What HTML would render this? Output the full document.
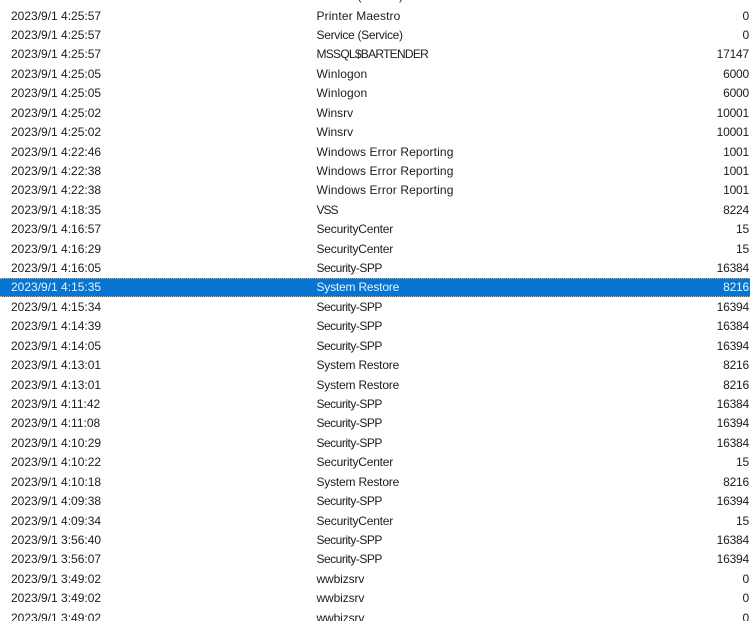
<!DOCTYPE html>
<html>
<head>
<meta charset="utf-8">
<style>
html,body{margin:0;padding:0;background:#fff;}
#v{position:relative;width:750px;height:621px;overflow:hidden;background:#fff;font-family:"Liberation Sans",sans-serif;font-size:12px;color:#1c1c1c;}
#v span{position:absolute;line-height:14px;white-space:nowrap;filter:blur(0.25px);}
.a{left:11px;}
.b{left:316.5px;}
.c{right:1px;letter-spacing:-0.2px;}
.pm{letter-spacing:0.13px;}
.sv{letter-spacing:-0.3px;}
.ms{letter-spacing:-0.73px;}
.wl{letter-spacing:0.1px;}
.we{letter-spacing:0.13px;}
.vs{letter-spacing:-1px;}
.sc{letter-spacing:-0.2px;}
.sp{letter-spacing:-0.5px;}
.sr{letter-spacing:-0.2px;}
.ww{letter-spacing:-0.12px;}
#sel{position:absolute;left:0;top:278px;width:750px;height:19px;background:#0874d1;border-top:1px dotted #e8a050;border-bottom:1px dotted #e8a050;box-sizing:border-box;}
.w{color:#eaf3fb;}
</style>
</head>
<body>
<div id="v">
<div id="sel"></div>
<span class="a" style="top:-11px">2023/9/1 4:25:57</span><span class="b sv" style="top:-11px">Service (Service)</span><span class="c" style="top:-11px">0</span>
<span class="a" style="top:9px">2023/9/1 4:25:57</span><span class="b pm" style="top:9px">Printer Maestro</span><span class="c" style="top:9px">0</span>
<span class="a" style="top:28px">2023/9/1 4:25:57</span><span class="b sv" style="top:28px">Service (Service)</span><span class="c" style="top:28px">0</span>
<span class="a" style="top:47px">2023/9/1 4:25:57</span><span class="b ms" style="top:47px">MSSQL$BARTENDER</span><span class="c" style="top:47px">17147</span>
<span class="a" style="top:67px">2023/9/1 4:25:05</span><span class="b wl" style="top:67px">Winlogon</span><span class="c" style="top:67px">6000</span>
<span class="a" style="top:86px">2023/9/1 4:25:05</span><span class="b wl" style="top:86px">Winlogon</span><span class="c" style="top:86px">6000</span>
<span class="a" style="top:106px">2023/9/1 4:25:02</span><span class="b" style="top:106px">Winsrv</span><span class="c" style="top:106px">10001</span>
<span class="a" style="top:125px">2023/9/1 4:25:02</span><span class="b" style="top:125px">Winsrv</span><span class="c" style="top:125px">10001</span>
<span class="a" style="top:145px">2023/9/1 4:22:46</span><span class="b we" style="top:145px">Windows Error Reporting</span><span class="c" style="top:145px">1001</span>
<span class="a" style="top:164px">2023/9/1 4:22:38</span><span class="b we" style="top:164px">Windows Error Reporting</span><span class="c" style="top:164px">1001</span>
<span class="a" style="top:183px">2023/9/1 4:22:38</span><span class="b we" style="top:183px">Windows Error Reporting</span><span class="c" style="top:183px">1001</span>
<span class="a" style="top:203px">2023/9/1 4:18:35</span><span class="b vs" style="top:203px">VSS</span><span class="c" style="top:203px">8224</span>
<span class="a" style="top:222px">2023/9/1 4:16:57</span><span class="b sc" style="top:222px">SecurityCenter</span><span class="c" style="top:222px">15</span>
<span class="a" style="top:242px">2023/9/1 4:16:29</span><span class="b sc" style="top:242px">SecurityCenter</span><span class="c" style="top:242px">15</span>
<span class="a" style="top:261px">2023/9/1 4:16:05</span><span class="b sp" style="top:261px">Security-SPP</span><span class="c" style="top:261px">16384</span>
<span class="a w" style="top:280px">2023/9/1 4:15:35</span><span class="b w sr" style="top:280px">System Restore</span><span class="c w" style="top:280px">8216</span>
<span class="a" style="top:300px">2023/9/1 4:15:34</span><span class="b sp" style="top:300px">Security-SPP</span><span class="c" style="top:300px">16394</span>
<span class="a" style="top:319px">2023/9/1 4:14:39</span><span class="b sp" style="top:319px">Security-SPP</span><span class="c" style="top:319px">16384</span>
<span class="a" style="top:339px">2023/9/1 4:14:05</span><span class="b sp" style="top:339px">Security-SPP</span><span class="c" style="top:339px">16394</span>
<span class="a" style="top:358px">2023/9/1 4:13:01</span><span class="b sr" style="top:358px">System Restore</span><span class="c" style="top:358px">8216</span>
<span class="a" style="top:378px">2023/9/1 4:13:01</span><span class="b sr" style="top:378px">System Restore</span><span class="c" style="top:378px">8216</span>
<span class="a" style="top:397px">2023/9/1 4:11:42</span><span class="b sp" style="top:397px">Security-SPP</span><span class="c" style="top:397px">16384</span>
<span class="a" style="top:416px">2023/9/1 4:11:08</span><span class="b sp" style="top:416px">Security-SPP</span><span class="c" style="top:416px">16394</span>
<span class="a" style="top:436px">2023/9/1 4:10:29</span><span class="b sp" style="top:436px">Security-SPP</span><span class="c" style="top:436px">16384</span>
<span class="a" style="top:455px">2023/9/1 4:10:22</span><span class="b sc" style="top:455px">SecurityCenter</span><span class="c" style="top:455px">15</span>
<span class="a" style="top:475px">2023/9/1 4:10:18</span><span class="b sr" style="top:475px">System Restore</span><span class="c" style="top:475px">8216</span>
<span class="a" style="top:494px">2023/9/1 4:09:38</span><span class="b sp" style="top:494px">Security-SPP</span><span class="c" style="top:494px">16394</span>
<span class="a" style="top:514px">2023/9/1 4:09:34</span><span class="b sc" style="top:514px">SecurityCenter</span><span class="c" style="top:514px">15</span>
<span class="a" style="top:533px">2023/9/1 3:56:40</span><span class="b sp" style="top:533px">Security-SPP</span><span class="c" style="top:533px">16384</span>
<span class="a" style="top:552px">2023/9/1 3:56:07</span><span class="b sp" style="top:552px">Security-SPP</span><span class="c" style="top:552px">16394</span>
<span class="a" style="top:572px">2023/9/1 3:49:02</span><span class="b ww" style="top:572px">wwbizsrv</span><span class="c" style="top:572px">0</span>
<span class="a" style="top:591px">2023/9/1 3:49:02</span><span class="b ww" style="top:591px">wwbizsrv</span><span class="c" style="top:591px">0</span>
<span class="a" style="top:611px">2023/9/1 3:49:02</span><span class="b ww" style="top:611px">wwbizsrv</span><span class="c" style="top:611px">0</span>
</div>
</body>
</html>
